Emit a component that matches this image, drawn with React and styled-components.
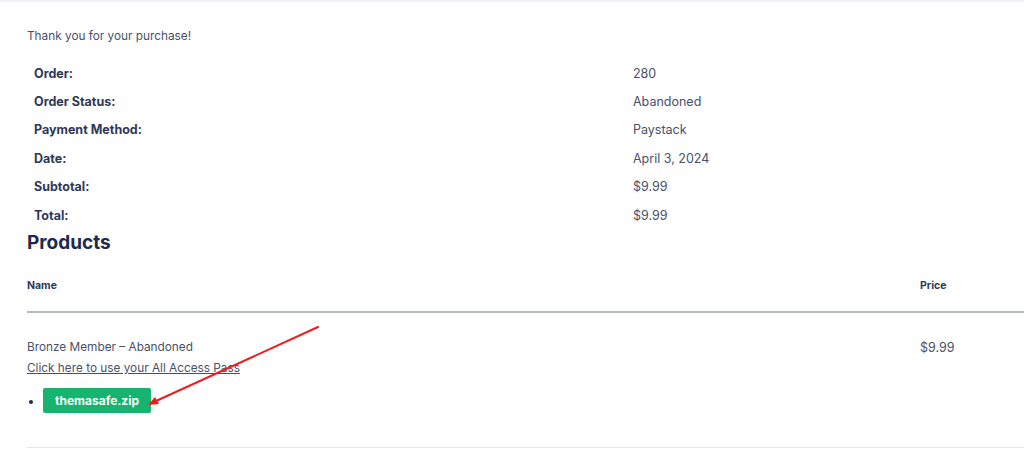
import React from 'react';
import styled, { createGlobalStyle } from 'styled-components';

const GlobalStyle = createGlobalStyle`
  html, body {
    margin: 0;
    padding: 0;
    background: #fff;
    overflow: hidden;
  }
  body {
    font-family: Inter, "Noto Sans", "Liberation Sans", sans-serif;
    color: #4a5068;
  }
`;

const Page = styled.div`
  position: relative;
  width: 1024px;
  height: 461px;
  border-top: 2px solid #eef1f6;
  box-sizing: border-box;
  padding: 27px 0 0 27px;
  overflow: hidden;
`;

const Intro = styled.p`
  margin: 0 0 16px;
  font-size: 11.8px;
  color: #4a5068;
`;

const Details = styled.div`
  display: grid;
  grid-template-columns: 599px 1fr;
  grid-auto-rows: 28.4px;
  align-items: center;
  font-size: 12.5px;
`;

const Label = styled.div`
  padding-left: 7px;
  font-weight: 700;
  color: #2f3858;
`;

const Value = styled.div`
  padding-left: 7px;
  color: #4a5068;
`;

const Heading = styled.h2`
  margin: 2px 0 0;
  font-size: 19px;
  font-weight: 700;
  color: #1f2a4d;
  line-height: 24px;
`;

const Row = styled.div`
  display: grid;
  grid-template-columns: 893px 1fr;
  border-bottom: ${p => (p.head ? '2px solid #b7bbc9' : '1px solid #e2e4ea')};
  padding: ${p => (p.head ? '24px 0 19px' : '24px 0 34px')};
`;

const HeadCell = styled.div`
  font-size: 10.5px;
  font-weight: 700;
  color: #2f3858;
`;

const Cell = styled.div`
  font-size: ${p => (p.price ? '12.5px' : '11.8px')};
  color: #4a5068;
  line-height: 21px;
`;

const PassLink = styled.a`
  color: #4a5068;
  text-decoration: underline;
  display: block;
`;

const Files = styled.ul`
  margin: 9px 0 0;
  padding-left: 16px;
  li::marker {
    color: #1f2a4d;
  }
`;

const Download = styled.a`
  display: inline-block;
  background: #16b46e;
  color: #fff;
  font-weight: 700;
  font-size: 12px;
  line-height: 25px;
  padding: 0 12px;
  border-radius: 2px;
  text-decoration: none;
`;

const Arrow = styled.svg`
  position: absolute;
  left: 0;
  top: 0;
  pointer-events: none;
`;

const details = [
  ['Order:', '280'],
  ['Order Status:', 'Abandoned'],
  ['Payment Method:', 'Paystack'],
  ['Date:', 'April 3, 2024'],
  ['Subtotal:', '$9.99'],
  ['Total:', '$9.99'],
];

export default function App() {
  return (
    <Page>
      <GlobalStyle />
      <Intro>Thank you for your purchase!</Intro>
      <Details>
        {details.map(([label, value]) => (
          <React.Fragment key={label}>
            <Label>{label}</Label>
            <Value>{value}</Value>
          </React.Fragment>
        ))}
      </Details>
      <Heading>Products</Heading>
      <Row head>
        <HeadCell>Name</HeadCell>
        <HeadCell>Price</HeadCell>
      </Row>
      <Row>
        <Cell>
          Bronze Member – Abandoned
          <PassLink href="#">Click here to use your All Access Pass</PassLink>
          <Files>
            <li>
              <Download href="#">themasafe.zip</Download>
            </li>
          </Files>
        </Cell>
        <Cell price>$9.99</Cell>
      </Row>
      <Arrow width="1024" height="461" viewBox="0 0 1024 461">
        <line x1="318" y1="325" x2="156" y2="399" stroke="#ee1c1c" strokeWidth="2" strokeLinecap="round" />
        <polygon points="148,403 155,395 159,402" fill="#ee1c1c" />
      </Arrow>
    </Page>
  );
}
